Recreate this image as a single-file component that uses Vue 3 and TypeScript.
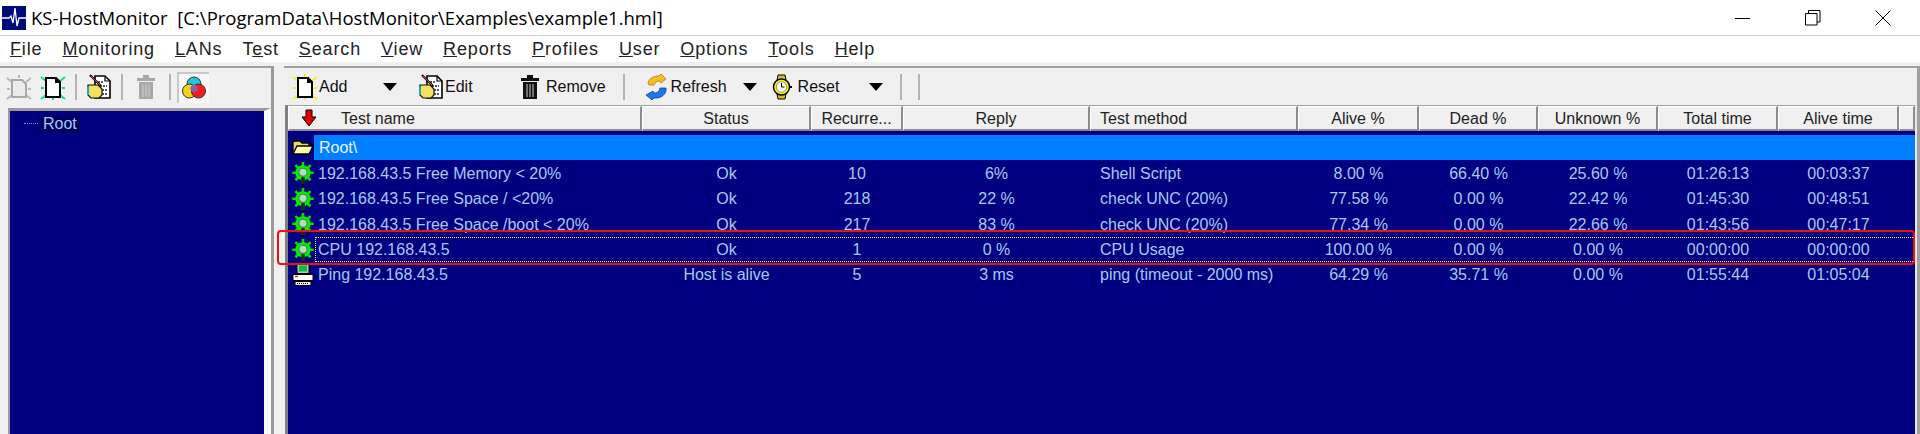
<script setup lang="ts">
interface TestRow {
  icon: 'folder' | 'bulb' | 'ping'
  name: string
  status: string
  recurrence: string
  reply: string
  method: string
  alive: string
  dead: string
  unknown: string
  total: string
  aliveTime: string
  selected?: boolean
  focused?: boolean
}

const windowTitle = 'KS-HostMonitor  [C:\\ProgramData\\HostMonitor\\Examples\\example1.hml]'

const menus = [
  { key: 'F', rest: 'ile', before: '' },
  { key: 'M', rest: 'onitoring', before: '' },
  { key: 'L', rest: 'ANs', before: '' },
  { key: 'e', rest: 'st', before: 'T' },
  { key: 'S', rest: 'earch', before: '' },
  { key: 'V', rest: 'iew', before: '' },
  { key: 'R', rest: 'eports', before: '' },
  { key: 'P', rest: 'rofiles', before: '' },
  { key: 'U', rest: 'ser', before: '' },
  { key: 'O', rest: 'ptions', before: '' },
  { key: 'T', rest: 'ools', before: '' },
  { key: 'H', rest: 'elp', before: '' }
]

const headers = [
  { label: 'Test name', cls: 'name-head' },
  { label: 'Status', cls: '' },
  { label: 'Recurre...', cls: '' },
  { label: 'Reply', cls: '' },
  { label: 'Test method', cls: 'left' },
  { label: 'Alive %', cls: '' },
  { label: 'Dead %', cls: '' },
  { label: 'Unknown %', cls: '' },
  { label: 'Total time', cls: '' },
  { label: 'Alive time', cls: '' }
]

const rows: TestRow[] = [
  { icon: 'folder', name: 'Root\\', status: '', recurrence: '', reply: '', method: '', alive: '', dead: '', unknown: '', total: '', aliveTime: '', selected: true },
  { icon: 'bulb', name: '192.168.43.5 Free Memory < 20%', status: 'Ok', recurrence: '10', reply: '6%', method: 'Shell Script', alive: '8.00 %', dead: '66.40 %', unknown: '25.60 %', total: '01:26:13', aliveTime: '00:03:37' },
  { icon: 'bulb', name: '192.168.43.5 Free Space / <20%', status: 'Ok', recurrence: '218', reply: '22 %', method: 'check UNC (20%)', alive: '77.58 %', dead: '0.00 %', unknown: '22.42 %', total: '01:45:30', aliveTime: '00:48:51' },
  { icon: 'bulb', name: '192.168.43.5 Free Space /boot < 20%', status: 'Ok', recurrence: '217', reply: '83 %', method: 'check UNC (20%)', alive: '77.34 %', dead: '0.00 %', unknown: '22.66 %', total: '01:43:56', aliveTime: '00:47:17' },
  { icon: 'bulb', name: 'CPU 192.168.43.5', status: 'Ok', recurrence: '1', reply: '0 %', method: 'CPU Usage', alive: '100.00 %', dead: '0.00 %', unknown: '0.00 %', total: '00:00:00', aliveTime: '00:00:00', focused: true },
  { icon: 'ping', name: 'Ping 192.168.43.5', status: 'Host is alive', recurrence: '5', reply: '3 ms', method: 'ping (timeout - 2000 ms)', alive: '64.29 %', dead: '35.71 %', unknown: '0.00 %', total: '01:55:44', aliveTime: '01:05:04' }
]
</script>

<template>
  <div class="window">
    <svg class="sprites" width="0" height="0">
      <symbol id="doc-edit" viewBox="0 0 26 26">
        <path d="M9 2h10l5 5v17H9z" fill="#fff" stroke="#000" stroke-width="1.6" />
        <path d="M19 2v5h5" fill="none" stroke="#000" stroke-width="1.2" />
        <path d="M12 8h5M14 12h7M16 16h6M16 20h6" stroke="#222" stroke-width="1.4" stroke-dasharray="2 1" />
        <path d="M2 11h10l4 4v6l-3 3H5l-3-3z" fill="#f4e05a" stroke="#111" stroke-width="1.2" />
        <path d="M1 13h2v8H1z" fill="#18a8d8" />
        <path d="M4 1l11 11" stroke="#111" stroke-width="2.2" />
        <path d="M5 2l9 9" stroke="#d84020" stroke-width="1" />
      </symbol>
      <symbol id="trash" viewBox="0 0 20 26">
        <path d="M7 1h6v3H7zM1 4h18v3H1z" fill="currentColor" />
        <path d="M3 8h14v17H3z" fill="currentColor" />
        <path d="M7 10v13M10 10v13M13 10v13" stroke="#cfcfcf" stroke-width="1" />
      </symbol>
      <symbol id="arrow" viewBox="0 0 14 8">
        <path d="M0 0h14L7 8z" fill="#000" />
      </symbol>
      <symbol id="bulb" viewBox="0 0 24 28">
        <path d="M12 0v24M0 12h24M3.5 3.5l17 17M20.5 3.5l-17 17" stroke="#00e000" stroke-width="3" />
        <circle cx="12" cy="12" r="8.5" fill="#00f000" />
        <circle cx="12" cy="11.5" r="4.6" fill="#b5dcbc" stroke="#4a7a5a" stroke-width="1.2" />
        <path d="M10 17h4v8h-4z" fill="#1c2a20" />
        <path d="M11 25h2v2h-2z" fill="#000" />
      </symbol>
      <symbol id="folder" viewBox="0 0 22 15">
        <path d="M1 13V2l2-1h5l2 2h7v3" fill="#e8d870" stroke="#000" stroke-width="1.3" />
        <path d="M1 14l4-8h16l-4 8z" fill="#ffffa8" stroke="#000" stroke-width="1.3" />
      </symbol>
      <symbol id="ping" viewBox="0 0 22 24">
        <path d="M5 1h12v10H5z" fill="#c0c0c0" stroke="#000" />
        <path d="M7 3h8v6H7z" fill="#00c040" />
        <path d="M1 12h20v6H1z" fill="#fff" stroke="#000" />
        <path d="M3 14h3" stroke="#e02020" stroke-width="1.5" />
        <path d="M3 19h16v4H3z" fill="#e8e8e8" stroke="#000" />
        <path d="M5 21h12" stroke="#000" stroke-dasharray="1 1" />
      </symbol>
    </svg>

    <header class="titlebar">
      <svg class="app-icon" viewBox="0 0 24 24" width="24" height="24">
        <rect width="24" height="24" fill="#000a78" />
        <path d="M0 12h7l2-2 2 7 2-15 2 18 2-8h7" fill="none" stroke="#fff" stroke-width="1.3" />
      </svg>
      <span class="title">{{ windowTitle }}</span>
      <div class="win-buttons">
        <button class="win-btn">
          <svg viewBox="0 0 16 16" width="16" height="16"><path d="M0 8.5h15" stroke="#000" /></svg>
        </button>
        <button class="win-btn">
          <svg viewBox="0 0 16 16" width="16" height="16">
            <path d="M.5 3.5h11.5v11.5H.5zM3.5 3.5V.5h11.5v11.5H12" fill="none" stroke="#000" />
          </svg>
        </button>
        <button class="win-btn">
          <svg viewBox="0 0 16 16" width="16" height="16"><path d="M.5.5l15 15M15.5.5l-15 15" stroke="#000" /></svg>
        </button>
      </div>
    </header>

    <nav class="menubar">
      <span v-for="m in menus" :key="m.key + m.rest" class="menu-item">{{ m.before }}<u>{{ m.key }}</u>{{ m.rest }}</span>
    </nav>

    <main class="workspace">
      <aside class="left-pane">
        <div class="toolbar left-toolbar">
          <svg class="t-new" viewBox="0 0 26 26" width="26" height="26">
            <path d="M1 4l5 4M25 4l-5 4M1 25l5-4M25 25l-5-4M13 1v3M1 15h3M22 15h3" stroke="#b8b8b8" stroke-width="2" />
            <path d="M6 6h10l4 4v13H6z" fill="#ececec" stroke="#a8a8a8" stroke-width="2" />
          </svg>
          <svg class="t-new-active" viewBox="0 0 26 26" width="26" height="26">
            <path d="M1 3l5 4M25 3l-5 4M1 25l5-4M25 25l-5-4M13 24v2M1 14h3M22 14h3" stroke="#18e070" stroke-width="2" />
            <path d="M6 4h10l4 4v15H6z" fill="#fff" stroke="#000" stroke-width="2" />
            <path d="M15 4v5h5z" fill="#000" />
          </svg>
          <i class="sep" />
          <svg class="t-icon" width="26" height="26"><use href="#doc-edit" /></svg>
          <i class="sep" />
          <svg class="t-trash" width="20" height="26"><use href="#trash" /></svg>
          <i class="sep" />
          <div class="pressed">
            <svg viewBox="0 0 24 24" width="24" height="24">
              <circle cx="12" cy="8" r="7" fill="#20c8e0" stroke="#333" />
              <circle cx="7.5" cy="15" r="7" fill="#f4d020" stroke="#333" />
              <circle cx="16.5" cy="15" r="7" fill="#f02020" stroke="#333" />
              <circle cx="12" cy="12.5" r="3.6" fill="#9060a0" />
            </svg>
          </div>
        </div>
        <div class="tree">
          <div class="tree-node">
            <i class="tree-dots" />
            <span class="tree-label">Root</span>
          </div>
        </div>
      </aside>

      <section class="right-pane">
        <div class="toolbar right-toolbar">
          <div class="tool tool-add">
            <svg viewBox="0 0 26 26" width="26" height="26">
              <path d="M1 3l5 4M25 3l-5 4M1 25l5-4M25 25l-5-4M13 24v2M1 14h3M22 14h3M13 0v3" stroke="#f4f020" stroke-width="2" />
              <path d="M6 4h10l4 4v15H6z" fill="#fff" stroke="#000" stroke-width="2" />
              <path d="M15 4v5h5z" fill="#000" />
            </svg>
            <span>Add</span>
          </div>
          <svg class="drop drop-add" width="14" height="8"><use href="#arrow" /></svg>
          <div class="tool tool-edit">
            <svg width="26" height="26"><use href="#doc-edit" /></svg>
            <span>Edit</span>
          </div>
          <div class="tool tool-remove">
            <svg class="trash-dark" width="20" height="26"><use href="#trash" /></svg>
            <span>Remove</span>
          </div>
          <i class="sep sep-remove" />
          <div class="tool tool-refresh">
            <svg viewBox="0 0 24 26" width="24" height="26">
              <path d="M3 9c1-5 6-7 11-7l2-2 5 5-5 4-1-2c-3 0-5 1-6 4H4z" fill="#f4c020" stroke="#c07010" stroke-width=".8" />
              <path d="M21 14c1 6-5 11-12 10l-2 2-6-5 7-4 1 2c3 0 5-1 6-5z" fill="#1878e8" stroke="#1040a0" stroke-width=".8" />
            </svg>
            <span>Refresh</span>
          </div>
          <svg class="drop drop-refresh" width="14" height="8"><use href="#arrow" /></svg>
          <div class="tool tool-reset">
            <svg viewBox="0 0 20 26" width="20" height="26">
              <path d="M6 1h7l1 5H5zM5 20h9l-1 5H6z" fill="#d8c020" stroke="#000" />
              <circle cx="9.5" cy="13" r="8" fill="#f8f020" stroke="#000" stroke-width="1.4" />
              <circle cx="9.5" cy="13" r="5.2" fill="#fff" stroke="#555" stroke-width=".6" />
              <path d="M9.5 9v4h3" fill="none" stroke="#000" />
              <path d="M18 12h2v2h-2z" fill="#000" />
            </svg>
            <span>Reset</span>
          </div>
          <svg class="drop drop-reset" width="14" height="8"><use href="#arrow" /></svg>
          <i class="sep sep-a" />
          <i class="sep sep-b" />
        </div>

        <div class="list">
          <div class="grid head-row">
            <div v-for="h in headers" :key="h.label" class="head-cell" :class="h.cls">
              <svg v-if="h.label === 'Test name'" class="sort-arrow" viewBox="0 0 14 18" width="14" height="18">
                <path d="M4 1h6v7h4l-7 9-7-9h4z" fill="#e80000" stroke="#000" stroke-width="1" />
              </svg>
              <span class="head-label">{{ h.label }}</span>
            </div>
            <div class="head-cell" />
          </div>

          <div class="body">
            <div v-for="row in rows" :key="row.name" class="grid row" :class="{ selected: row.selected, focused: row.focused }">
              <div class="cell name-cell">
                <svg class="row-icon" :class="`icon-${row.icon}`"><use :href="`#${row.icon}`" /></svg>
                <span class="name-text">{{ row.name }}</span>
              </div>
              <div class="cell">{{ row.status }}</div>
              <div class="cell">{{ row.recurrence }}</div>
              <div class="cell">{{ row.reply }}</div>
              <div class="cell left">{{ row.method }}</div>
              <div class="cell">{{ row.alive }}</div>
              <div class="cell">{{ row.dead }}</div>
              <div class="cell">{{ row.unknown }}</div>
              <div class="cell">{{ row.total }}</div>
              <div class="cell">{{ row.aliveTime }}</div>
              <div class="cell" />
            </div>
          </div>
        </div>
      </section>
    </main>

    <!-- red annotation drawn over the screenshot -->
    <div class="annotation" />
  </div>
</template>

<style>
html,
body {
  margin: 0;
  background: #fff;
  overflow: hidden;
}
</style>

<style scoped>
.window {
  position: relative;
  width: 1920px;
  height: 434px;
  overflow: hidden;
  display: flex;
  flex-direction: column;
  background: #f0f0f0;
  font-family: "Liberation Sans", Arial, sans-serif;
  font-size: 16px;
  color: #111;
}

.sprites {
  position: absolute;
}

.titlebar {
  height: 35px;
  flex: none;
  display: flex;
  align-items: center;
  padding-left: 2px;
  background: #fff;
  border-bottom: 1px solid #cfcfcf;
}

.app-icon {
  margin-right: 5px;
}

.title {
  font-family: "Open Sans", sans-serif;
  font-size: 18.5px;
  white-space: pre;
  color: #000;
}

.win-buttons {
  margin-left: auto;
  display: flex;
  padding-right: 2px;
}

.win-btn {
  width: 70px;
  height: 35px;
  padding: 0;
  border: 0;
  background: none;
  display: flex;
  align-items: center;
  justify-content: center;
}

.menubar {
  height: 26px;
  flex: none;
  display: flex;
  align-items: center;
  gap: 20px;
  padding-left: 10px;
  background: #fff;
  font-size: 18px;
  letter-spacing: 0.85px;
  color: #222;
}

.menu-item {
  white-space: pre;
}

.workspace {
  flex: 1;
  display: flex;
  gap: 10px;
  padding-top: 4px;
  min-height: 0;
}

.left-pane {
  width: 271px;
  flex: none;
  display: flex;
  flex-direction: column;
  border-top: 2px solid #a0a0a0;
  border-right: 3px solid #9a9a9a;
}

.right-pane {
  flex: 1;
  min-width: 0;
  display: flex;
  flex-direction: column;
  border-top: 2px solid #a0a0a0;
  border-right: 3px solid #a0a0a0;
}

.toolbar {
  height: 38px;
  flex: none;
  display: flex;
  align-items: center;
  background: #f0f0f0;
}

.left-toolbar {
  padding-left: 6px;
}

.t-new-active {
  margin-left: 8px;
}

.sep {
  width: 2px;
  height: 26px;
  flex: none;
  background: #b4b4b4;
}

.left-toolbar .sep {
  margin: 0 9px;
}

.t-trash {
  color: #a8a8a8;
  margin: 0 4px;
}

.pressed {
  width: 32px;
  height: 31px;
  margin-left: -3px;
  display: flex;
  align-items: center;
  justify-content: center;
  background: #f8f8f8;
  border-left: 2px solid #c8c8c8;
  border-top: 2px solid #c8c8c8;
  box-sizing: border-box;
}

.tree {
  flex: 1;
  margin-top: 2px;
  margin-left: 8px;
  background: #000080;
  border-top: 3px solid #9a9a9a;
  border-left: 2px solid #9a9a9a;
  border-right: 7px solid #f8f8f8;
  color: #a6caf0;
}

.tree-node {
  height: 25px;
  display: flex;
  align-items: center;
  padding-left: 14px;
}

.tree-dots {
  width: 14px;
  border-top: 1px dotted #8090b0;
}

.tree-label {
  padding: 0 3px;
  margin-left: 2px;
  background: #000060;
}

.right-toolbar {
  padding-left: 8px;
}

.tool {
  display: flex;
  align-items: center;
  flex: none;
}

.tool span {
  margin-left: 1px;
}

.tool-add {
  width: 91px;
}

.drop {
  flex: none;
}

.drop-add {
  margin-right: 21px;
}

.tool-edit {
  width: 102px;
}

.tool-remove span {
  margin-left: 6px;
}

.trash-dark {
  color: #111;
}

.sep-remove {
  margin: 0 20px 0 17px;
}

.tool-refresh span {
  margin-left: 2px;
}

.drop-refresh {
  margin-left: 16px;
  margin-right: 15px;
}

.tool-reset span {
  margin-left: 6px;
}

.drop-reset {
  margin-left: 30px;
}

.sep-a {
  margin-left: 17px;
}

.sep-b {
  margin-left: 16px;
}

.list {
  flex: 1;
  min-height: 0;
  display: flex;
  flex-direction: column;
  margin-top: -1px;
  border-left: 3px solid #808080;
  margin-left: 1px;
  border-right: 2px solid #e8e8e8;
  background: #000080;
}

.grid {
  display: grid;
  grid-template-columns: 354px 169px 92px 187px 208px 121px 119px 120px 120px 121px 1fr;
}

.head-row {
  height: 26px;
  flex: none;
  border-top: 1px solid #a0a0a0;
  box-sizing: border-box;
}

.head-cell {
  position: relative;
  display: flex;
  align-items: center;
  justify-content: center;
  background: #f0f0f0;
  border-top: 1px solid #fff;
  border-left: 1px solid #fff;
  border-right: 2px solid #8c8c8c;
  border-bottom: 2px solid #8c8c8c;
  color: #222;
  white-space: nowrap;
}

.head-label {
  padding-top: 2px;
}

.head-cell.left {
  justify-content: flex-start;
  padding-left: 9px;
}

.name-head {
  justify-content: flex-start;
  padding-left: 52px;
}

.sort-arrow {
  position: absolute;
  left: 13px;
  top: 2px;
}

.body {
  flex: 1;
  padding-top: 4px;
  color: #a6caf0;
}

.row {
  height: 25.4px;
}

.cell {
  display: flex;
  align-items: center;
  justify-content: center;
  white-space: nowrap;
}

.cell.left {
  justify-content: flex-start;
  padding-left: 10px;
}

.name-cell {
  justify-content: flex-start;
}

.row-icon {
  flex: none;
  margin-left: 4px;
  width: 22px;
  height: 25px;
  overflow: visible;
}

.icon-bulb {
  margin-top: 2px;
}

.name-text {
  margin-left: 4px;
}

.selected {
  color: #eaf4ff;
}

.selected .cell:not(.name-cell),
.selected .name-text {
  background: #0080ff;
  align-self: stretch;
  display: flex;
  align-items: center;
}

.selected .name-text {
  flex: 1;
  margin-left: 0;
  padding-left: 5px;
}

.focused {
  position: relative;
}

.focused::after {
  content: "";
  position: absolute;
  left: 27px;
  right: 0;
  top: 0;
  bottom: 0;
  border: 1px dotted #fff0a0;
}

.annotation {
  position: absolute;
  left: 277px;
  top: 230px;
  width: 1634px;
  height: 31px;
  border: 2px solid #f01010;
  border-radius: 4px;
}
</style>
